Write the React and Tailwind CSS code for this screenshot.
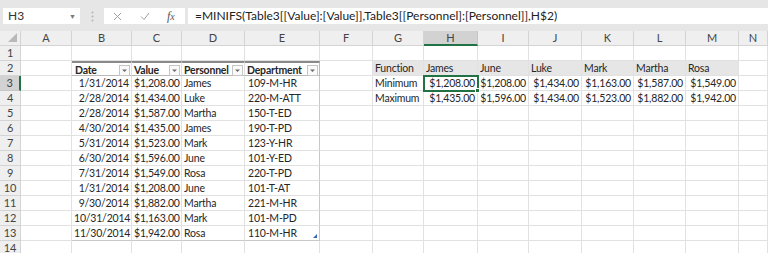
import React from "react";

const COLS = ["A","B","C","D","E","F","G","H","I","J","K","L","M","N"];

const data = [
  ["1/31/2014","$1,208.00","James","109-M-HR"],
  ["2/28/2014","$1,434.00","Luke","220-M-ATT"],
  ["2/28/2014","$1,587.00","Martha","150-T-ED"],
  ["4/30/2014","$1,435.00","James","190-T-PD"],
  ["5/31/2014","$1,523.00","Mark","123-Y-HR"],
  ["6/30/2014","$1,596.00","June","101-Y-ED"],
  ["7/31/2014","$1,549.00","Rosa","220-T-PD"],
  ["1/31/2014","$1,208.00","June","101-T-AT"],
  ["9/30/2014","$1,882.00","Martha","221-M-HR"],
  ["10/31/2014","$1,163.00","Mark","101-M-PD"],
  ["11/30/2014","$1,942.00","Rosa","110-M-HR"],
];

const names = ["James","June","Luke","Mark","Martha","Rosa"];
const mins = ["$1,208.00","$1,208.00","$1,434.00","$1,163.00","$1,587.00","$1,549.00"];
const maxs = ["$1,435.00","$1,596.00","$1,434.00","$1,523.00","$1,882.00","$1,942.00"];

function FilterBtn() {
  return (
    <span className="absolute right-[1px] top-[2px] w-[11px] h-[11px] border border-[#c6c6c6] bg-[#fafafa] flex items-center justify-center">
      <svg width="7" height="5" viewBox="0 0 7 5"><path d="M1 1.5h5L3.5 4z" fill="#6b6b6b" /></svg>
    </span>
  );
}

function Cell({ children, className = "" }) {
  return (
    <div className={"relative border-r border-b border-[#e1e1e1] px-[2px] leading-[15px] whitespace-nowrap text-[#262626] " + className}>
      {children}
    </div>
  );
}

export default function App() {
  const rows = [];
  for (let r = 1; r <= 14; r++) {
    const cells = [];
    const isSelRow = r === 3;
    cells.push(
      <div key="h" className={"border-r border-b text-center leading-[14px] text-[11px] text-[#444] " + (isSelRow ? "bg-[#d2d2d2] border-r-[#217346] border-r-2 border-b-[#c6c6c6]" : "bg-[#efefef] border-[#d4d4d4]")}>{r}</div>
    );
    for (let c = 0; c < 14; c++) {
      const col = COLS[c];
      let content = null;
      let cls = "";
      if (r === 2 && c >= 1 && c <= 4) {
        const labels = ["Date","Value","Personnel","Department"];
        content = (<><span className="font-bold">{labels[c-1]}</span><FilterBtn /></>);
        cls = "border-t-2 border-t-[#8a8a8a] border-b-[#b9b9b9] leading-[12px] " + (c === 4 ? "border-r-[#b9b9b9]" : "");
      } else if (r >= 3 && r <= 13 && c >= 1 && c <= 4) {
        const v = data[r-3][c-1];
        content = v;
        if (c === 1 || c === 2) cls = "text-right";
        if (c === 4) cls += " pl-[3px] border-r-[#c9c9c9]";
        if (r === 13) cls += " border-b-[#c9c9c9]";
      } else if (r === 2 && c >= 6 && c <= 12) {
        content = c === 6 ? "Function" : names[c-7];
        cls = "bg-[#e7e6e6] border-[#d6d6d6]";
      } else if (r === 3 && c >= 6 && c <= 12) {
        content = c === 6 ? "Minimum" : mins[c-7];
        if (c > 6) cls = "text-right";
      } else if (r === 4 && c >= 6 && c <= 12) {
        content = c === 6 ? "Maximum" : maxs[c-7];
        if (c > 6) cls = "text-right";
      }
      if (r === 3 && col === "H") {
        cls += " outline outline-2 outline-[#217346] -outline-offset-1 z-10";
        content = (<>{content}<span className="absolute -right-[3px] -bottom-[3px] w-[5px] h-[5px] bg-[#217346] border border-white" /></>);
      }
      if (r === 13 && col === "E") {
        content = (<>{content}<span className="absolute right-[2px] bottom-[2px] w-0 h-0 border-l-[4px] border-l-transparent border-b-[4px] border-b-[#3b6bb5]" /></>);
      }
      if (c === 1 && r === 2) cls += " pl-[3px]";
      cells.push(<Cell key={col} className={cls}>{content}</Cell>);
    }
    rows.push(...cells.map((el, i) => React.cloneElement(el, { key: r + "-" + i })));
  }

  return (
    <div className="w-[768px] h-[253px] overflow-hidden bg-white text-[10.5px] tracking-[-0.2px]" style={{ fontFamily: "Lato, 'Liberation Sans', sans-serif" }}>
      {/* formula bar */}
      <div className="h-[31px] bg-[#e6e6e6] pt-[8px] pl-[3px] flex items-start tracking-normal">
        <div className="w-[77px] h-[16px] bg-white flex items-center justify-between pl-[5px] pr-[4px] text-[12px] text-[#333]">
          <span>H3</span>
          <span className="text-[7px] text-[#777]">▼</span>
        </div>
        <div className="w-[24px] h-[16px] flex items-center justify-center">
          <svg width="3" height="11" viewBox="0 0 3 11"><circle cx="1.5" cy="1.5" r="1" fill="#b5b5b5"/><circle cx="1.5" cy="5.5" r="1" fill="#b5b5b5"/><circle cx="1.5" cy="9.5" r="1" fill="#b5b5b5"/></svg>
        </div>
        <div className="w-[81px] h-[16px] bg-white flex items-center">
          <svg className="ml-[9px]" width="9" height="9" viewBox="0 0 9 9"><path d="M1 1l7 7M8 1L1 8" stroke="#a0a0a0" strokeWidth="1"/></svg>
          <svg className="ml-[18px]" width="10" height="9" viewBox="0 0 10 9"><path d="M1 4.5l3 3L9 1" stroke="#a0a0a0" strokeWidth="1" fill="none"/></svg>
          <span className="ml-[17px] italic text-[12px] text-[#555]" style={{ fontFamily: "'Liberation Serif', serif" }}>f<span className="text-[10px]">x</span></span>
        </div>
        <div className="ml-[3px] flex-1 h-[16px] bg-white flex items-center pl-[7px] text-[12px] text-[#222] whitespace-nowrap">
          =MINIFS(Table3[[Value]:[Value]],Table3[[Personnel]:[Personnel]],H$2)
        </div>
      </div>
      {/* grid */}
      <div className="grid grid-cols-[21px_51px_60px_50px_63px_75px_53px_51px_54px_51px_53px_52px_52px_53px_1fr] auto-rows-[15px]">
        <div className="bg-[#efefef] border-r border-b border-[#d4d4d4] relative">
          <span className="absolute right-[3px] bottom-[3px] w-0 h-0 border-l-[9px] border-l-transparent border-b-[9px] border-b-[#b9b9b9]" />
        </div>
        {COLS.map((c) => (
          <div key={c} className={"text-center leading-[14px] text-[11px] tracking-normal text-[#444] " + (c === "H" ? "bg-[#d2d2d2] border-b-2 border-b-[#217346] border-r border-r-[#c6c6c6]" : "bg-[#efefef] border-r border-b border-[#d4d4d4]")}>{c}</div>
        ))}
        {rows}
      </div>
    </div>
  );
}
